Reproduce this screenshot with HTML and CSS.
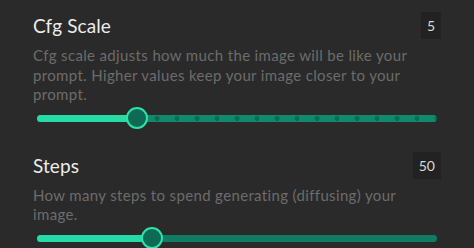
FILE: index.html
```html
<!DOCTYPE html>
<html>
<head>
<meta charset="utf-8">
<link rel="stylesheet" href="styles.css">
</head>
<body>
<div class="panel">
  <section class="setting">
    <div class="setting-head">
      <h2 class="setting-title">Cfg Scale</h2>
      <span class="setting-value">5</span>
    </div>
    <p class="setting-desc">Cfg scale adjusts how much the image will be like your prompt. Higher values keep your image closer to your prompt.</p>
    <div class="slider">
      <div class="track track-dotted">
        <div class="fill" style="width:25%"></div>
        <div class="thumb" style="left:25%"></div>
      </div>
    </div>
  </section>
  <section class="setting">
    <div class="setting-head">
      <h2 class="setting-title">Steps</h2>
      <span class="setting-value">50</span>
    </div>
    <p class="setting-desc">How many steps to spend generating (diffusing) your image.</p>
    <div class="slider">
      <div class="track">
        <div class="fill" style="width:28.75%"></div>
        <div class="thumb" style="left:28.75%"></div>
      </div>
    </div>
  </section>
</div>
</body>
</html>
```
FILE: styles.css
```css
html, body {
  margin: 0;
  padding: 0;
  background: #2a2a2a;
  overflow: hidden;
}
.panel {
  padding: 12px 33px 0 33px;
  font-family: "Lato", "Liberation Sans", sans-serif;
  display: flex;
  flex-direction: column;
  gap: 21px;
}
.setting {
  display: flex;
  flex-direction: column;
}
.setting-head {
  display: flex;
  justify-content: space-between;
  align-items: center;
  height: 27px;
}
.setting-title {
  margin: 0;
  font-size: 19px;
  font-weight: 400;
  color: #ececec;
  letter-spacing: 0.1px;
}
.setting-value {
  background: #222222;
  color: #d8d8d8;
  font-size: 14px;
  height: 27px;
  line-height: 27px;
  padding: 0 6px;
  min-width: 8px;
  text-align: center;
}
.setting-desc {
  margin: 7px 0 0 0;
  font-size: 15px;
  line-height: 19.5px;
  color: #6c6c6c;
  letter-spacing: 0.35px;
  max-width: 400px;
}
.slider {
  margin: 2px 4px 0 4px;
  height: 24px;
  display: flex;
  align-items: center;
}
.track {
  position: relative;
  width: 100%;
  height: 7px;
  border-radius: 4px;
  background: #0f7d62;
}
.track-dotted {
  background-color: #108a6b;
  background-image: radial-gradient(circle, #0b6a53 2.2px, transparent 2.8px);
  background-size: 20px 7px;
  background-position: -10px 0;
}
.fill {
  position: absolute;
  left: 0;
  top: 0;
  bottom: 0;
  border-radius: 4px;
  background: #26dba6;
}
.thumb {
  position: absolute;
  top: 50%;
  width: 18px;
  height: 18px;
  margin: -11.5px 0 0 -11.5px;
  border: 2.5px solid #2fe0aa;
  border-radius: 50%;
  background: #0c6a55;
}
```
